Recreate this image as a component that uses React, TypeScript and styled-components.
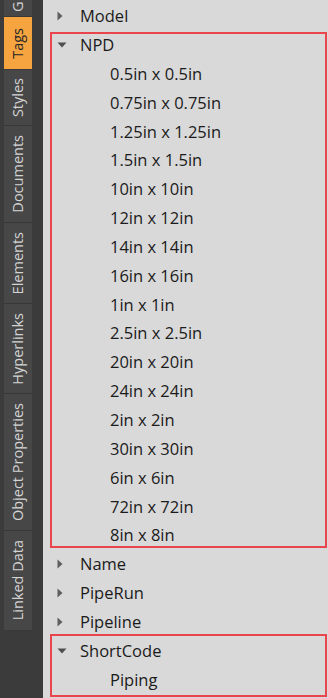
import { createGlobalStyle, styled } from 'styled-components';

type TabItem = { label: string; size: number; active?: boolean };

type TreeNode = { label: string; open?: boolean; children?: string[]; mark?: [number, number] };

const tabs: TabItem[] = [
  { label: 'Groups', size: 60 },
  { label: 'Tags', size: 53, active: true },
  { label: 'Styles', size: 56 },
  { label: 'Documents', size: 97 },
  { label: 'Elements', size: 81 },
  { label: 'Hyperlinks', size: 90 },
  { label: 'Object Properties', size: 137 },
  { label: 'Linked Data', size: 100 },
];

const tree: TreeNode[] = [
  { label: 'Model' },
  {
    label: 'NPD',
    open: true,
    mark: [1.2, 2.2],
    children: [
      '0.5in x 0.5in',
      '0.75in x 0.75in',
      '1.25in x 1.25in',
      '1.5in x 1.5in',
      '10in x 10in',
      '12in x 12in',
      '14in x 14in',
      '16in x 16in',
      '1in x 1in',
      '2.5in x 2.5in',
      '20in x 20in',
      '24in x 24in',
      '2in x 2in',
      '30in x 30in',
      '6in x 6in',
      '72in x 72in',
      '8in x 8in',
    ],
  },
  { label: 'Name' },
  { label: 'PipeRun' },
  { label: 'Pipeline' },
  { label: 'ShortCode', open: true, mark: [-2.7, -2.6], children: ['Piping'] },
];

const GlobalStyle = createGlobalStyle`
  html, body {
    margin: 0;
    padding: 0;
    background: #d9d9d9;
  }
  #root {
    height: 698px;
    overflow: hidden;
  }
`;

const App = () => {
  return (
    <>
      <GlobalStyle />
      <Frame>
        <SideBar>
          <TabColumn>
            {tabs.map(tab => (
              <Tab key={tab.label} $size={tab.size} $active={tab.active}>
                <TabLabel>{tab.label}</TabLabel>
              </Tab>
            ))}
          </TabColumn>
        </SideBar>
        <TreePanel>
          {tree.map(node => {
            const head = (
              <Row $depth={0}>
                <Expander>{node.open ? <ArrowDown /> : <ArrowRight />}</Expander>
                <Label>{node.label}</Label>
              </Row>
            );
            if (!node.children) return <div key={node.label}>{head}</div>;
            return (
              <Group key={node.label} $top={node.mark?.[0] ?? 0} $bottom={node.mark?.[1] ?? 0}>
                {head}
                {node.children.map(child => (
                  <Row key={child} $depth={1}>
                    <Expander />
                    <Label>{child}</Label>
                  </Row>
                ))}
              </Group>
            );
          })}
        </TreePanel>
      </Frame>
    </>
  );
};

const ArrowRight = () => (
  <svg width="6" height="10" viewBox="0 0 6 10">
    <path d="M0.5 0.5 L5.5 5 L0.5 9.5 Z" fill="#5e5e5e" />
  </svg>
);

const ArrowDown = () => (
  <svg width="10" height="6" viewBox="0 0 10 6">
    <path d="M0.5 0.5 L9.5 0.5 L5 5.5 Z" fill="#4f4f4f" />
  </svg>
);

const Frame = styled.div`
  display: flex;
  width: 328px;
  height: 698px;
  overflow: hidden;
`;

const SideBar = styled.nav`
  flex: 0 0 43px;
  height: 100%;
  background: #3b3b3b;
  overflow: hidden;
`;

const TabColumn = styled.div`
  display: flex;
  flex-direction: column;
  width: 28px;
  margin: -43px 0 0 4px;
`;

const Tab = styled.div<{ $size: number; $active?: boolean }>`
  display: flex;
  align-items: center;
  justify-content: center;
  height: ${p => p.$size}px;
  box-sizing: border-box;
  border-bottom: 1px solid #383838;
  background: ${p => (p.$active ? '#f6a43f' : '#474747')};
  color: ${p => (p.$active ? '#262626' : '#d4d4d4')};
`;

const TabLabel = styled.span`
  writing-mode: vertical-rl;
  transform: rotate(180deg);
  white-space: nowrap;
  font-family: 'Open Sans', 'Noto Sans', sans-serif;
  font-size: 14.5px;
  line-height: 1;
`;

const TreePanel = styled.div`
  flex: 1;
  padding-top: 2px;
  background: #d9d9d9;
  font-family: 'Open Sans', 'Noto Sans', sans-serif;
  font-size: 16.5px;
  color: #1b1b1b;
`;

const Group = styled.div<{ $top: number; $bottom: number }>`
  position: relative;

  &::after {
    content: '';
    position: absolute;
    top: ${p => p.$top}px;
    bottom: ${p => p.$bottom}px;
    left: 7px;
    right: 1px;
    border: 2px solid #e8464c;
    pointer-events: none;
  }
`;

const Row = styled.div<{ $depth: number }>`
  display: flex;
  align-items: center;
  height: 28.85px;
  padding-left: ${p => 14 + p.$depth * 30}px;
  white-space: nowrap;
`;

const Expander = styled.span`
  display: flex;
  align-items: center;
  flex: 0 0 23px;
  height: 100%;
`;

const Label = styled.span`
  line-height: 1;
`;

export default App;
